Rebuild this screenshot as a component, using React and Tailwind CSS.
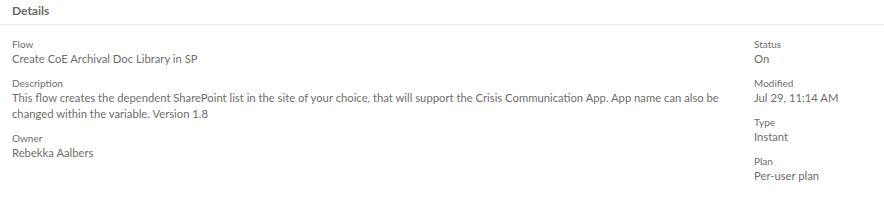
export default function App() {
  return (
    <div className="w-[884px] h-[202px] bg-white font-['Lato',sans-serif] text-[#706e6c]">
      <div className="h-[25px] border-b border-[#edebe9] px-3 pt-[2px]">
        <h2 className="text-[12px] font-bold leading-[18px] text-[#6b6967]">Details</h2>
      </div>
      <div className="flex px-3 pt-[12px]">
        <div className="w-[742px] flex flex-col gap-[9px]">
          <Field label="Flow" value="Create CoE Archival Doc Library in SP" />
          <Field
            label="Description"
            value="This flow creates the dependent SharePoint list in the site of your choice, that will support the Crisis Communication App. App name can also be changed within the variable. Version 1.8"
            narrow
          />
          <Field label="Owner" value="Rebekka Aalbers" />
        </div>
        <div className="flex flex-col gap-[9px]">
          <Field label="Status" value="On" />
          <Field label="Modified" value="Jul 29, 11:14 AM" />
          <Field label="Type" value="Instant" />
          <Field label="Plan" value="Per-user plan" />
        </div>
      </div>
    </div>
  );
}

function Field({ label, value, narrow }) {
  return (
    <div>
      <div className="text-[10px] leading-[14px] text-[#706e6c]">{label}</div>
      <div className={`text-[11.25px] leading-[16px] text-[#706e6c] ${narrow ? "max-w-[722px]" : ""}`}>{value}</div>
    </div>
  );
}
